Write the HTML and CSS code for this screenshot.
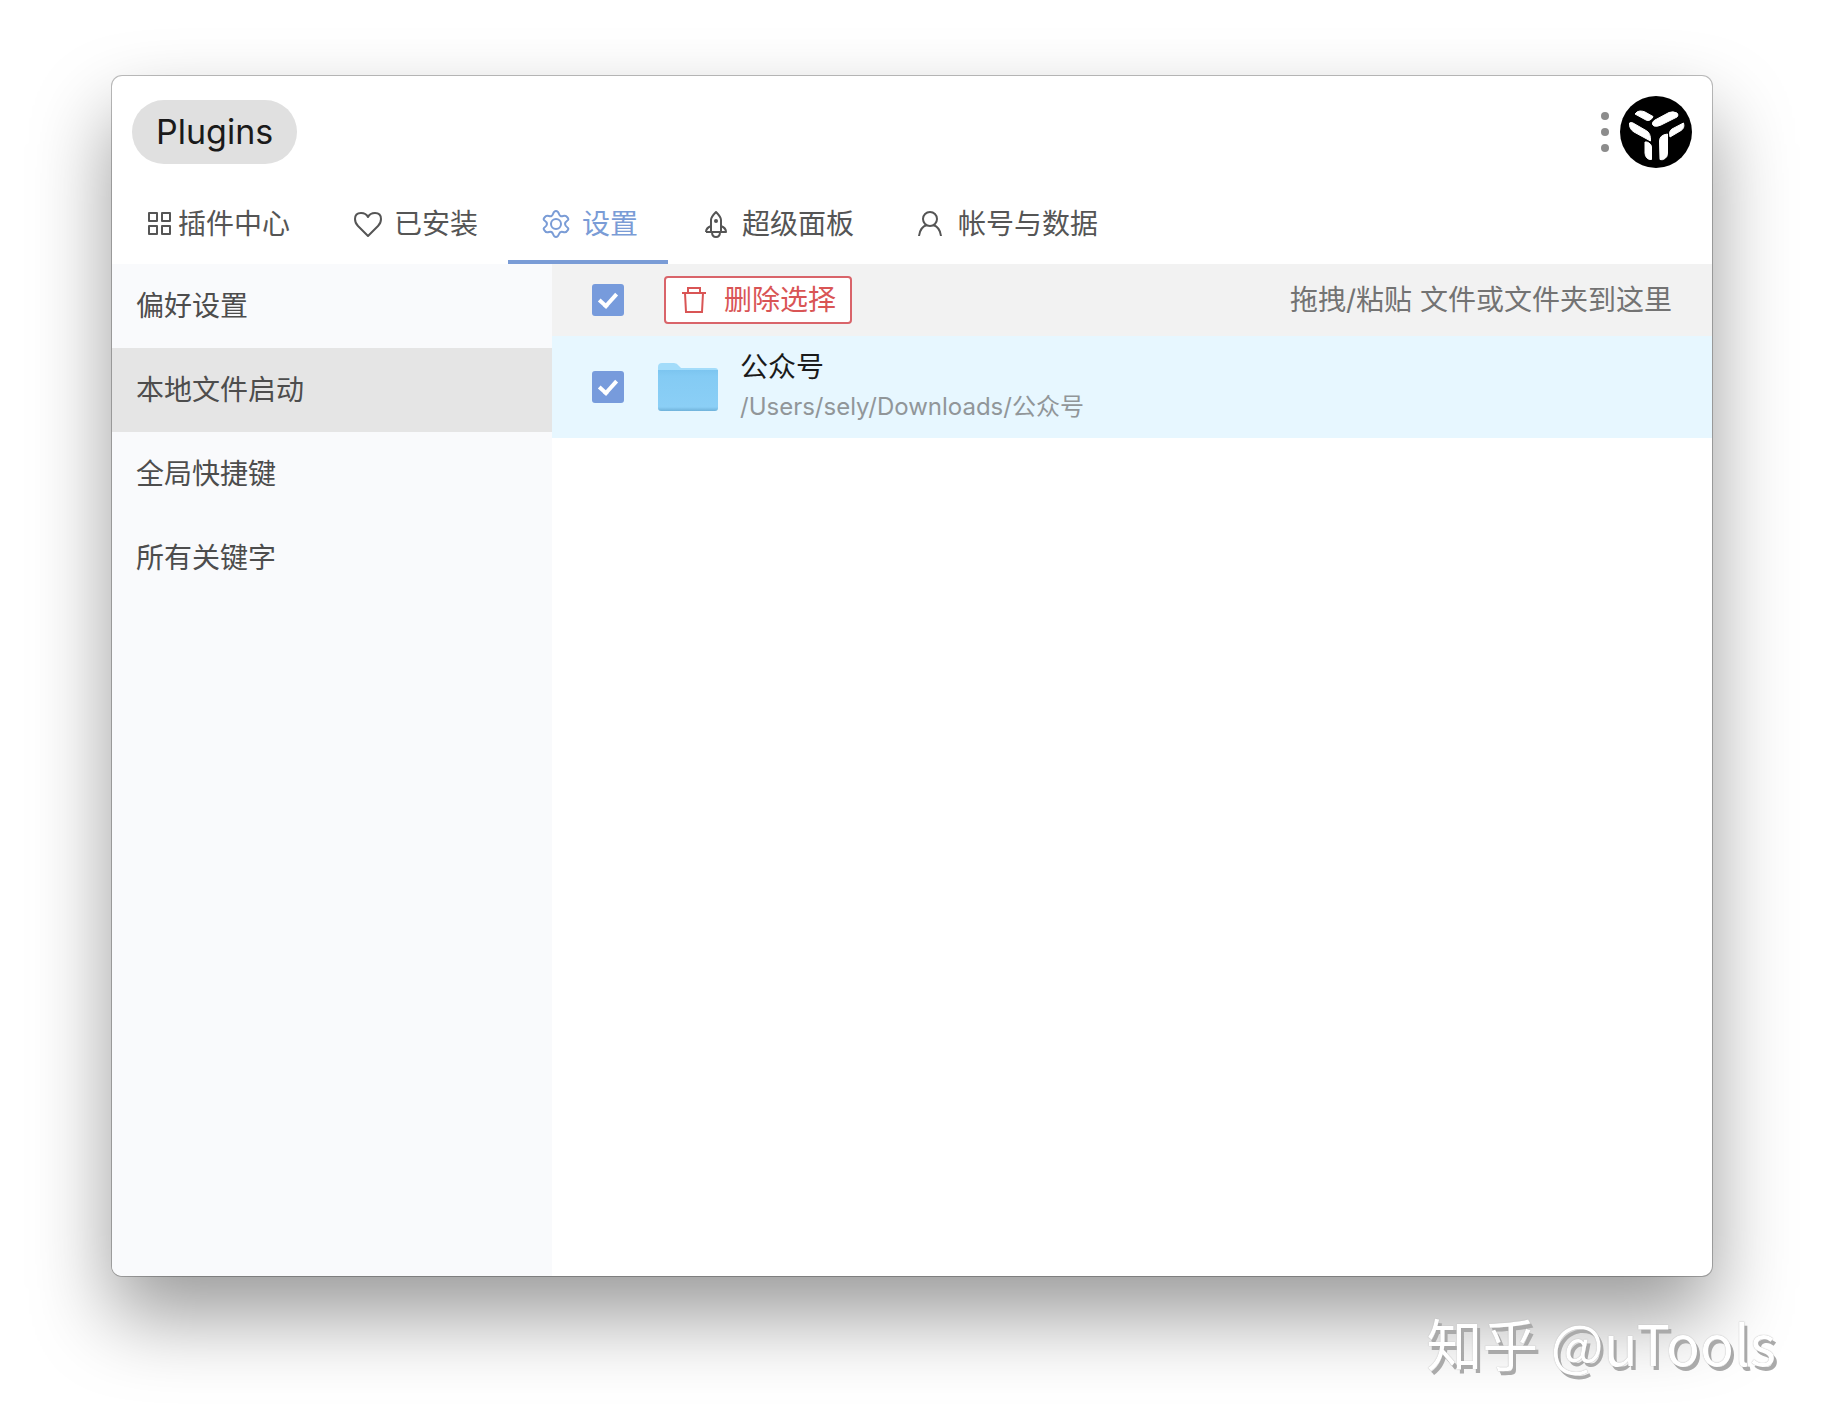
FILE: index.html
```html
<!DOCTYPE html>
<html lang="zh-CN">
<head>
    <meta charset="UTF-8">
    <meta name="viewport" content="width=device-width, initial-scale=1.0">
    <title>uTools - Plugins</title>
    <link rel="stylesheet" href="styles.css">
</head>
<body>
    <div class="window">
        <header class="topbar">
            <span class="keyword">Plugins</span>
            <div class="topbar-right">
                <button class="more" type="button" aria-label="更多"><i></i><i></i><i></i></button>
                <svg class="logo" viewBox="0 0 72 72" aria-label="uTools">
                    <circle cx="36" cy="36" r="36" fill="#000"/>
                    <g fill="#fff" stroke="#fff" stroke-linejoin="round">
                        <path d="M15 18Q17 15 20 15Q23 15 25 16L33 20.500Q33 22 30 24Q28 25 26 24Z"/>
                        <path d="M32.500 27Q33 25 35 24L49 16.500Q53 15 57 17Q59 19 57 21L41 29Q37 31 34 30Q32 29 32.500 27Z"/>
                        <path d="M9.500 27Q11 26 13 27L26 34.500Q31 37 30.500 45L14 36Q9 33 9.500 27Z"/>
                        <path d="M63.500 27Q65 32 61 34.500L50 41Q48.500 35 52 33Z"/>
                        <path d="M25 46Q27 45.500 29 47Q31.500 48.500 31.500 51V63.500Q29 64 27 62Q25 60 25 57Z"/>
                        <path d="M47.500 38V57Q47.500 61 45 62.500Q42 64.500 40 63.500L39.500 45Q39.500 39 47.500 38Z"/>
                    </g>
                </svg>
            </div>
        </header>

        <nav class="tabs">
            <a class="tab tab-tight" href="#center">
                <svg viewBox="0 0 36 36"><path d="M7 7h8v8H7zM20 7h8v8h-8zM7 20h8v8H7zM20 20h8v8h-8z"/></svg>
                <span>插件中心</span>
            </a>
            <a class="tab" href="#installed">
                <svg viewBox="0 0 36 36"><path d="M18 30L8 20Q5 17 5 13Q5 7 11 7Q16 7 18 11Q20 7 25 7Q31 7 31 13Q31 17 28 20Z"/></svg>
                <span>已安装</span>
            </a>
            <a class="tab active" href="#settings">
                <svg viewBox="0 0 36 36"><circle cx="18" cy="18" r="5"/><path d="M15 8Q16 5 18 5Q20 5 21 8Q22 11 25 10Q28 9 29 11Q31 13 30 14Q27 16 27 18Q27 20 30 22Q31 23 29 25Q28 27 25 26Q22 25 21 28Q20 31 18 31Q16 31 15 28Q14 25 11 26Q8 27 7 25Q5 23 6 22Q9 20 9 18Q9 16 6 14Q5 13 7 11Q8 9 11 10Q14 11 15 8Z"/></svg>
                <span>设置</span>
            </a>
            <a class="tab" href="#panel">
                <svg viewBox="0 0 36 36"><path d="M13 26V14Q13 11 18 6Q23 11 23 14V26M8 26H28Q28 22 23 20M13 20Q8 22 8 26M14 26Q14 31 18 31Q22 31 22 26"/><circle class="dot" cx="18" cy="15" r="2"/></svg>
                <span>超级面板</span>
            </a>
            <a class="tab" href="#account">
                <svg viewBox="0 0 36 36"><circle cx="16" cy="13" r="7"/><path d="M5 30Q6 21 13 19M27 30Q26 21 19 19"/></svg>
                <span>帐号与数据</span>
            </a>
        </nav>

        <div class="body">
            <aside class="sidebar">
                <a href="#preference">偏好设置</a>
                <a class="selected" href="#local">本地文件启动</a>
                <a href="#hotkey">全局快捷键</a>
                <a href="#keywords">所有关键字</a>
            </aside>
            <main class="content">
                <div class="toolbar">
                    <input type="checkbox" aria-label="全选" checked>
                    <button class="delete" type="button">
                        <svg viewBox="0 0 28 28"><path d="M2 7h24M8 7V2h12v5M5 7l1 19h16l1-19"/></svg>
                        <span>删除选择</span>
                    </button>
                    <span class="hint">拖拽/粘贴 文件或文件夹到这里</span>
                </div>
                <div class="file">
                    <input type="checkbox" id="file-1" checked>
                    <svg class="folder" viewBox="0 0 60 48">
                        <defs>
                            <linearGradient id="front" x1="0" y1="0" x2="0" y2="1">
                                <stop offset="0" stop-color="#7cc5f0"/>
                                <stop offset="0.15" stop-color="#84cbf4"/>
                                <stop offset="0.9" stop-color="#8bcff6"/>
                                <stop offset="1" stop-color="#6fb2da"/>
                            </linearGradient>
                        </defs>
                        <path d="M0 4q0-4 4-4h12q3 0 5 3l2 2h34q3 0 3 3v12H0z" fill="#a3dcfa"/>
                        <path d="M0 7h60v38q0 3-3 3H3q-3 0-3-3z" fill="url(#front)"/>
                    </svg>
                    <label class="file-info" for="file-1">
                        <span class="file-name">公众号</span>
                        <span class="file-path">/Users/sely/Downloads/公众号</span>
                    </label>
                </div>
            </main>
        </div>
    </div>
    <div class="watermark">知乎 @uTools</div>
</body>
</html>
```
FILE: styles.css
```css
*,
*::after {
    margin: 0;
    padding: 0;
    box-sizing: border-box;
}

body {
    position: relative;
    display: flex;
    min-height: 100vh;
    padding: 76px 112px 148px;
    background: #fff;
    color: #555;
    font-family: Inter, "Noto Sans CJK SC", sans-serif;
    font-size: 28px;
    line-height: 40px;
}

a {
    color: inherit;
    text-decoration: none;
}

.window {
    flex: 1;
    display: flex;
    flex-direction: column;
    overflow: hidden;
    background: #fff;
    border-radius: 10px;
    box-shadow: 0 0 0 1px rgba(0, 0, 0, 0.25), 0 40px 80px rgba(0, 0, 0, 0.4);
}

/* Search bar */
.topbar {
    display: flex;
    align-items: center;
    justify-content: space-between;
    height: 112px;
    padding: 0 20px;
}

.keyword {
    padding: 0 24px;
    border-radius: 32px;
    background: #e0e0e0;
    color: #1a1a1a;
    font-size: 34px;
    line-height: 64px;
}

.topbar-right {
    display: flex;
    align-items: center;
    gap: 8px;
}

.more {
    display: flex;
    flex-direction: column;
    align-items: center;
    gap: 8px;
    width: 14px;
    border: none;
    background: none;
}

.more i {
    width: 8px;
    height: 8px;
    border-radius: 50%;
    background: #8c8c8c;
}

.logo {
    width: 72px;
    height: 72px;
}

/* Tabs */
.tabs {
    display: flex;
}

.tab {
    display: flex;
    align-items: center;
    gap: 8px;
    height: 76px;
    padding: 0 30px;
    border-bottom: 4px solid transparent;
}

.tab-tight {
    gap: 0;
}

.tab svg {
    width: 36px;
    height: 36px;
    fill: none;
    stroke: currentColor;
    stroke-width: 2;
    stroke-linejoin: round;
}

.tab .dot {
    fill: currentColor;
    stroke: none;
}

.tab.active {
    color: #7a9cd6;
    border-bottom-color: #7a9cd6;
}

/* Body */
.body {
    flex: 1;
    display: flex;
}

.sidebar {
    width: 440px;
    background: #f9fafc;
    color: #4d4d4d;
}

.sidebar a {
    display: block;
    padding: 0 24px;
    line-height: 84px;
}

.sidebar .selected {
    background: #e5e5e5;
}

.content {
    flex: 1;
}

.toolbar {
    display: flex;
    align-items: center;
    height: 72px;
    padding: 0 40px;
    background: #f2f2f2;
}

input[type="checkbox"] {
    appearance: none;
    display: grid;
    place-items: center;
    width: 32px;
    height: 32px;
    border-radius: 3px;
    background: #779bdc;
}

input[type="checkbox"]:checked::after {
    content: "";
    width: 18px;
    height: 11px;
    margin-bottom: 4px;
    border-left: 4px solid #fff;
    border-bottom: 4px solid #fff;
    transform: rotate(-48deg);
}

.delete {
    display: flex;
    align-items: center;
    gap: 16px;
    height: 48px;
    margin-left: 40px;
    padding: 0 14px;
    border: 2px solid #d9646a;
    border-radius: 4px;
    background: #fff;
    color: #d95555;
    font: inherit;
}

.delete svg {
    width: 28px;
    height: 28px;
    fill: none;
    stroke: currentColor;
    stroke-width: 2;
}

.hint {
    margin-left: auto;
    color: #737373;
}

.file {
    display: flex;
    align-items: center;
    height: 102px;
    padding: 0 40px;
    background: #e7f7ff;
}

.folder {
    width: 60px;
    height: 48px;
    margin: 0 22px 0 34px;
}

.file-info {
    display: flex;
    flex-direction: column;
}

.file-name {
    color: #1a1a1a;
}

.file-path {
    color: #919699;
    font-size: 24px;
}

.watermark {
    position: absolute;
    right: 48px;
    bottom: 42px;
    color: #fff;
    font-family: "Noto Sans CJK SC", sans-serif;
    font-size: 56px;
    line-height: 80px;
    text-shadow: 0 0 1px #999, 3px 4px 0 #aaa;
}
```
